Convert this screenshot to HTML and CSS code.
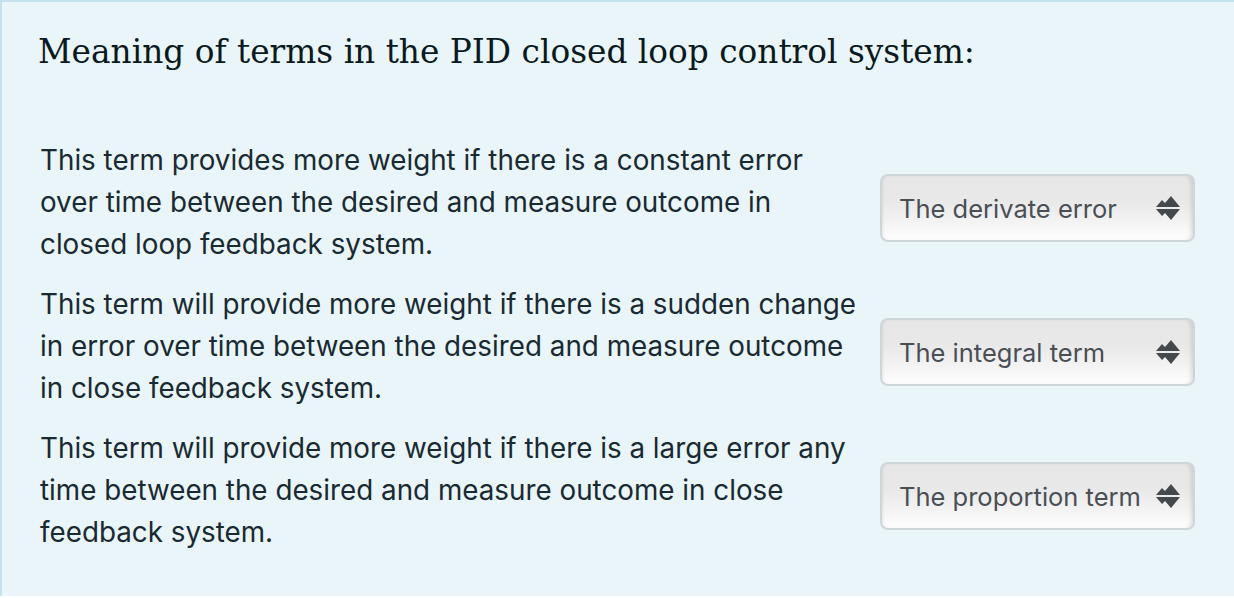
FILE: index.html
```html
<!DOCTYPE html>
<html lang="en">
<head>
  <meta charset="UTF-8">
  <title>PID terms</title>
  <link rel="stylesheet" href="styles.css">
</head>
<body>
<div class="qtext">
  <h2>Meaning of terms in the PID closed loop control system:</h2>
  <div class="matches">
    <div class="term">This term provides more weight if there is a constant error over time between the desired and measure outcome in closed loop feedback system.</div>
    <div class="pick">
      <span>The derivate error</span>
      <svg class="arrows" width="26" height="24" viewBox="0 0 26 24"><polygon points="1,11 7,4 10,7 16,0 25,11"/><polygon points="1,13 25,13 16,24 10,17 7,20"/></svg>
    </div>

    <div class="term">This term will provide more weight if there is a sudden change in error over time between the desired and measure outcome in close feedback system.</div>
    <div class="pick">
      <span>The integral term</span>
      <svg class="arrows" width="26" height="24" viewBox="0 0 26 24"><polygon points="1,11 7,4 10,7 16,0 25,11"/><polygon points="1,13 25,13 16,24 10,17 7,20"/></svg>
    </div>

    <div class="term">This term will provide more weight if there is a large error any time between the desired and measure outcome in close feedback system.</div>
    <div class="pick">
      <span>The proportion term</span>
      <svg class="arrows" width="26" height="24" viewBox="0 0 26 24"><polygon points="1,11 7,4 10,7 16,0 25,11"/><polygon points="1,13 25,13 16,24 10,17 7,20"/></svg>
    </div>
  </div>
</div>
</body>
</html>
```

FILE: styles.css
```css
body {
  margin: 0;
}
.qtext {
  background: #e9f5f8;
  border-top: 2px solid #c4e2eb;
  border-left: 2px solid #c4e2eb;
  height: 596px;
  padding: 0 39px 0 36px;
  box-sizing: border-box;
}
.qtext h2 {
  font-family: "DejaVu Serif", serif;
  font-weight: normal;
  font-size: 32.8px;
  color: #0b1a21;
  margin: 0;
  padding-top: 27px;
  line-height: 46px;
}
.matches {
  display: grid;
  grid-template-columns: 1fr 315px;
  column-gap: 18px;
  row-gap: 18px;
  align-items: center;
  margin-top: 64px;
  padding-left: 2px;
}
.term {
  font-family: Inter, "Liberation Sans", sans-serif;
  font-size: 27.8px;
  line-height: 42px;
  color: #1a2a33;
}
.pick {
  height: 68px;
  margin-top: 12px;
  box-sizing: border-box;
  border: 2px solid #cfd6da;
  border-radius: 8px;
  background: linear-gradient(#e6e6e6, #e9e9e9 40%, #fdfdfd);
  box-shadow: inset 3px 0 3px -2px rgba(0,0,0,.08), inset -4px 0 4px -2px rgba(0,0,0,.12);
  display: flex;
  align-items: center;
  justify-content: space-between;
  padding: 0 12px 0 17px;
  font-family: Inter, "Liberation Sans", sans-serif;
  font-size: 25.5px;
  color: #4a4f55;
}
.arrows {
  fill: #45494e;
}
```
